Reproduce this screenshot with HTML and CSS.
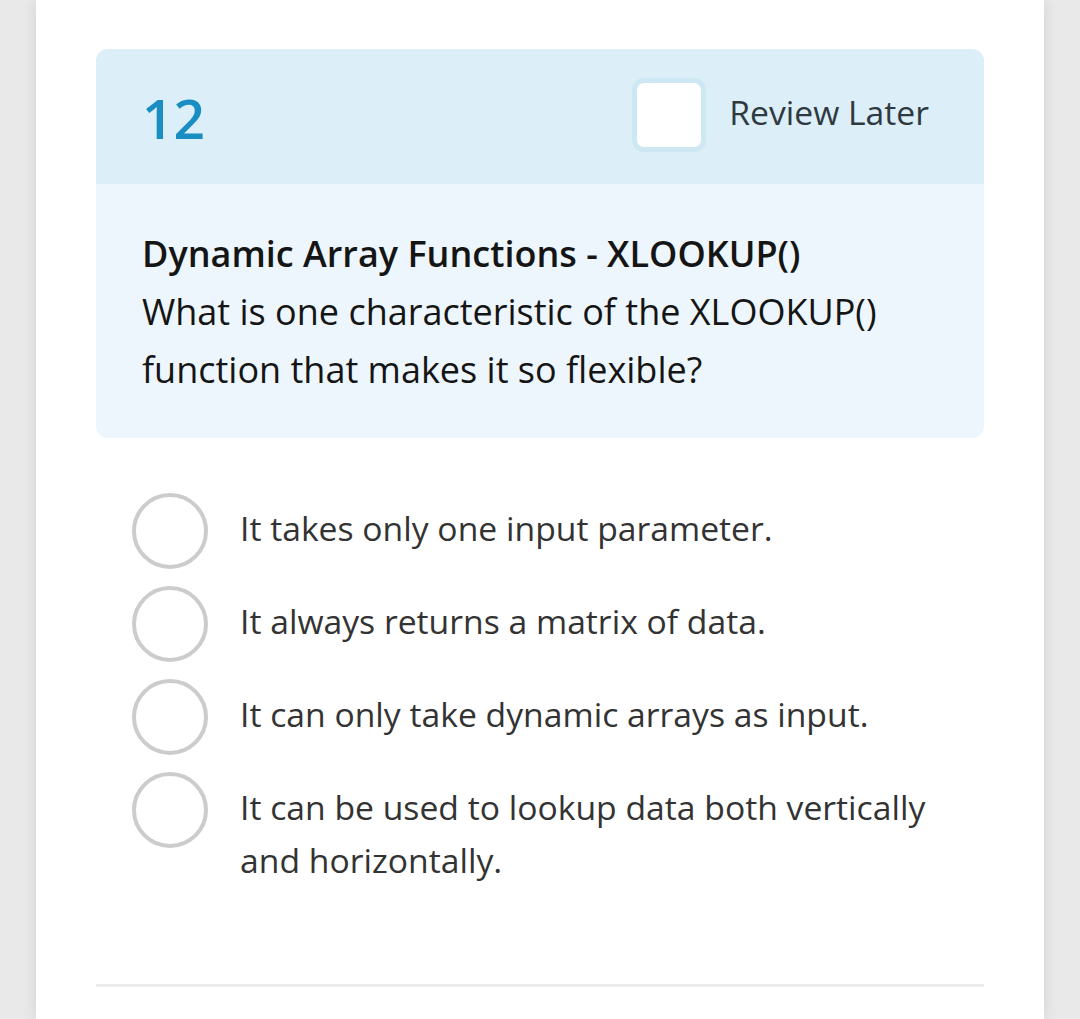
FILE: index.html
```html
<!DOCTYPE html>
<html lang="en">
<head>
<meta charset="utf-8">
<title>Question 12</title>
<link rel="stylesheet" href="styles.css">
</head>
<body>
<div class="card">
  <div class="q-head">
    <span class="q-num">12</span>
    <label class="review">
      <span class="checkbox"></span>
      <span class="review-text">Review Later</span>
    </label>
  </div>
  <div class="q-body">
    <div class="q-title">Dynamic Array Functions - XLOOKUP()</div>
    <div class="q-text">What is one characteristic of the XLOOKUP() function that makes it so flexible?</div>
  </div>
  <ul class="options">
    <li class="option"><span class="radio"></span><span class="opt-text">It takes only one input parameter.</span></li>
    <li class="option"><span class="radio"></span><span class="opt-text">It always returns a matrix of data.</span></li>
    <li class="option"><span class="radio"></span><span class="opt-text">It can only take dynamic arrays as input.</span></li>
    <li class="option"><span class="radio"></span><span class="opt-text">It can be used to lookup data both vertically and horizontally.</span></li>
  </ul>
  <div class="divider"></div>
</div>
</body>
</html>
```

FILE: styles.css
```css
html, body {
  margin: 0;
  padding: 0;
}
body {
  background: #e9e9e9;
  font-family: "Open Sans", "Noto Sans", sans-serif;
  height: 1019px;
  overflow: hidden;
}
.card {
  margin: 0 36px;
  background: #ffffff;
  min-height: 1019px;
  padding: 49px 60px 0;
  box-sizing: border-box;
  box-shadow: 0 0 14px rgba(0,0,0,0.10);
}
.q-head {
  height: 135px;
  background: #dcEEf8;
  border-radius: 12px 12px 0 0;
  display: flex;
  align-items: center;
  justify-content: space-between;
  padding: 0 55px 0 46px;
  box-sizing: border-box;
}
.q-num {
  font-size: 55px;
  font-weight: 600;
  color: #1a8dc3;
  line-height: 1;
  margin-top: 2px;
}
.review {
  display: flex;
  align-items: center;
  gap: 23px;
  margin-top: -4px;
}
.checkbox {
  width: 64px;
  height: 64px;
  background: #ffffff;
  border: 5px solid #cde7f3;
  border-radius: 12px;
}
.review-text {
  font-size: 33.7px;
  line-height: 40px;
  color: #2f3a40;
  margin-top: -6px;
}
.q-body {
  background: #edf6fc;
  border-radius: 0 0 12px 12px;
  padding: 41px 46px 39px;
  font-size: 36px;
  line-height: 58px;
  color: #151515;
}
.q-title {
  font-weight: 600;
}
.options {
  list-style: none;
  margin: 55px 0 0;
  padding: 0 0 0 36px;
  display: flex;
  flex-direction: column;
  gap: 17px;
}
.option {
  display: flex;
  align-items: flex-start;
  gap: 32px;
}
.radio {
  flex: none;
  width: 68px;
  height: 68px;
  border: 4px solid #cccccc;
  border-radius: 50%;
}
.opt-text {
  font-size: 33.7px;
  line-height: 53px;
  padding-top: 9px;
  color: #333333;
}
.divider {
  margin-top: 97px;
  height: 3px;
  background: #ececec;
}
```
